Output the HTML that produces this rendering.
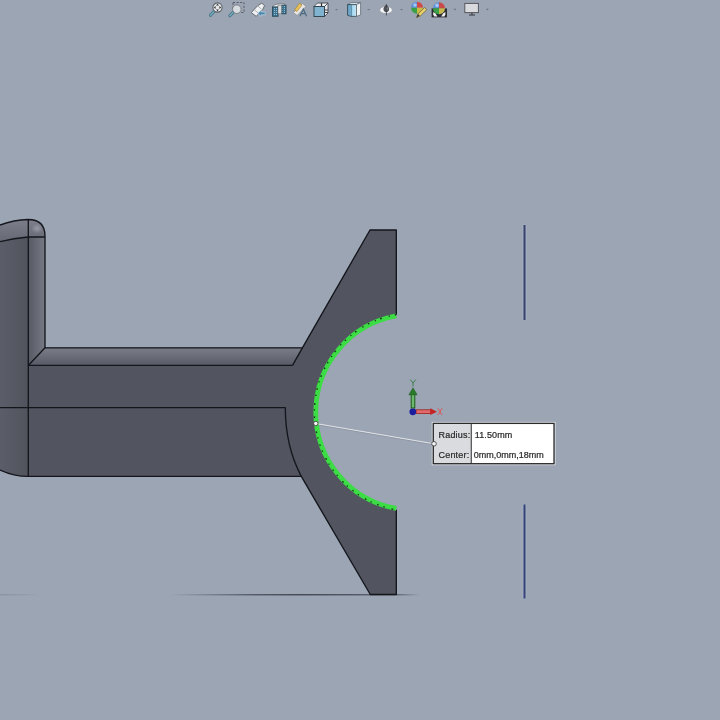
<!DOCTYPE html>
<html><head><meta charset="utf-8">
<style>
html,body{margin:0;padding:0;width:720px;height:720px;overflow:hidden;background:#9ca5b4;}
svg{display:block;position:absolute;left:0;top:0;}
.h{position:absolute;font-family:"Liberation Sans",sans-serif;font-size:9px;line-height:10px;color:#2a2a2a;white-space:nowrap;-webkit-text-stroke:0.22px #2a2a2a;}
.t{font-family:"Liberation Sans",sans-serif;font-size:9px;fill:#2a2a2a;stroke:#2a2a2a;stroke-width:0.15px;}
</style></head>
<body>
<svg width="720" height="720" viewBox="0 0 720 720">
<defs>
  <linearGradient id="gCube" x1="0" y1="0" x2="1" y2="0">
    <stop offset="0" stop-color="#5d97ba"/>
    <stop offset="0.45" stop-color="#7fb7d6"/>
    <stop offset="0.55" stop-color="#a3d6ef"/>
    <stop offset="1" stop-color="#c8e6f4"/>
  </linearGradient>
  <pattern id="hatch" width="2" height="2" patternUnits="userSpaceOnUse">
    <rect width="2" height="2" fill="#3f7590"/>
    <rect width="1" height="1" fill="#8cc0d8"/>
  </pattern>
  <linearGradient id="gShadow" x1="0" y1="0" x2="1" y2="0">
    <stop offset="0" stop-color="#3c3f49" stop-opacity="0.18"/>
    <stop offset="0.058" stop-color="#3c3f49" stop-opacity="0.1"/>
    <stop offset="0.093" stop-color="#3c3f49" stop-opacity="0"/>
    <stop offset="0.395" stop-color="#3c3f49" stop-opacity="0"/>
    <stop offset="0.59" stop-color="#3c3f49" stop-opacity="0.8"/>
    <stop offset="0.70" stop-color="#3c3f49" stop-opacity="1"/>
    <stop offset="0.92" stop-color="#3c3f49" stop-opacity="0.7"/>
    <stop offset="0.977" stop-color="#3c3f49" stop-opacity="0"/>
  </linearGradient>
  <linearGradient id="gLeft" x1="0" y1="0" x2="1" y2="0">
    <stop offset="0" stop-color="#5b5d68"/>
    <stop offset="1" stop-color="#51535d"/>
  </linearGradient>
  <linearGradient id="gRight" x1="0" y1="0" x2="1" y2="0">
    <stop offset="0" stop-color="#565862"/>
    <stop offset="1" stop-color="#777985"/>
  </linearGradient>
  <linearGradient id="gCham" x1="0" y1="0" x2="0" y2="1">
    <stop offset="0" stop-color="#7b7d89"/>
    <stop offset="1" stop-color="#585a65"/>
  </linearGradient>
  <linearGradient id="gTop" x1="0" y1="0" x2="0" y2="1">
    <stop offset="0" stop-color="#7c7e8b"/>
    <stop offset="1" stop-color="#666873"/>
  </linearGradient>
  <radialGradient id="gHi" cx="0.5" cy="0.5" r="0.5">
    <stop offset="0" stop-color="#a4a6b2" stop-opacity="0.75"/>
    <stop offset="1" stop-color="#a4a6b2" stop-opacity="0"/>
  </radialGradient>
</defs>

<!-- toolbar -->
<g id="toolbar">
  <!-- 1 zoom to fit -->
  <line x1="210.5" y1="15.3" x2="214" y2="11.5" stroke="#3f6f82" stroke-width="3" stroke-linecap="round"/>
  <line x1="210.5" y1="15.3" x2="214" y2="11.5" stroke="#79aec0" stroke-width="1.4" stroke-linecap="round"/>
  <circle cx="217.5" cy="7.5" r="4.6" fill="#e4e6ea" stroke="#5c5f66" stroke-width="1.1"/>
  <path d="M217.5,3.8 L219,5.6 L216,5.6Z M217.5,11.2 L219,9.4 L216,9.4Z M213.8,7.5 L215.6,6 L215.6,9Z M221.2,7.5 L219.4,6 L219.4,9Z" fill="#333"/>
  <!-- 2 zoom to area -->
  <rect x="233" y="2.5" width="11" height="10" fill="none" stroke="#55585f" stroke-width="1" stroke-dasharray="2 1.6"/>
  <line x1="229.8" y1="15.8" x2="233" y2="12.6" stroke="#3f6f82" stroke-width="3" stroke-linecap="round"/>
  <line x1="229.8" y1="15.8" x2="233" y2="12.6" stroke="#79aec0" stroke-width="1.4" stroke-linecap="round"/>
  <circle cx="236.8" cy="9.2" r="4.3" fill="#d6dbe0" stroke="#7a7e86" stroke-width="1"/>
  <!-- 3 previous view -->
  <path d="M251.3,12.6 L257.5,5.8 L261.8,3.2 L264.6,5.6 L262.6,9.6 L256.2,16.3 Z" fill="#eef0f2" stroke="#5f636a" stroke-width="0.9"/>
  <line x1="254.2" y1="9.7" x2="259" y2="13.6" stroke="#a0a3a8" stroke-width="0.8"/>
  <line x1="258" y1="6.2" x2="261.7" y2="9.4" stroke="#a0a3a8" stroke-width="0.8"/>
  <path d="M257.8,13.4 L261.2,10.2 L261.2,12 L265.2,12 L265.2,14.8 L261.2,14.8 L261.2,16.6 Z" fill="#4b86ab" stroke="#b9d6ea" stroke-width="0.7"/>
  <!-- 4 section view -->
  <path d="M272.5,7 Q273.5,4.5 277,4.2 L284.5,3.8 L284.5,6 L278,6.5 L278,7 Z" fill="#eef0f2" stroke="#555" stroke-width="0.6"/>
  <rect x="272.5" y="7" width="5.5" height="9.3" fill="url(#hatch)" stroke="#2a4b5c" stroke-width="0.9"/>
  <rect x="278" y="5.5" width="4" height="8" fill="#d8dadd" stroke="#777" stroke-width="0.5"/>
  <rect x="282" y="5.2" width="4" height="8.6" fill="url(#hatch)" stroke="#2a4b5c" stroke-width="0.9"/>
  <!-- 5 dynamic annotation -->
  <path d="M293.5,12.5 L302.5,3.5 L306,6.5 L297,15.5 Z" fill="#e8e6e6" stroke="#8a8a8a" stroke-width="0.7"/>
  <path d="M294.5,10 L299.5,3.2 L302,5 L297,11.5 Z" fill="#e8c25a" stroke="#9b7a30" stroke-width="0.6"/>
  <path d="M300,16.3 L303.3,9 L306.6,16.3 M301.3,13.6 L305.3,13.6" fill="none" stroke="#4b6b80" stroke-width="1.2"/>
  <!-- 6 view orientation -->
  <path d="M314,6.5 L317.5,3 L328,3 L324.5,6.5 Z" fill="#eceef2" stroke="#3a3c42" stroke-width="0.8"/>
  <path d="M324.5,6.5 L328,3 L328,13 L324.5,16.5 Z" fill="#e6e8ec" stroke="#3a3c42" stroke-width="0.8"/>
  <rect x="314" y="6.5" width="10.5" height="10" fill="#7fb3cf" stroke="#2c3f4c" stroke-width="0.9"/>
  <line x1="321.5" y1="3" x2="321.5" y2="6.5" stroke="#333" stroke-width="1.2"/>
  <line x1="324.8" y1="10" x2="328" y2="10" stroke="#333" stroke-width="0.9"/>
  <line x1="324.8" y1="12.5" x2="328" y2="12.5" stroke="#333" stroke-width="0.9"/>
  <!-- dropdown arrows -->
  <g fill="#6e7480">
    <path d="M335,9 L338,9 L336.5,10.6Z"/>
    <path d="M367.2,9 L370.2,9 L368.7,10.6Z"/>
    <path d="M400,9 L403,9 L401.5,10.6Z"/>
    <path d="M453.4,8.8 L456.4,8.8 L454.9,10.4Z"/>
    <path d="M485.8,8.8 L488.8,8.8 L487.3,10.4Z"/>
  </g>
  <!-- 7 display style cube -->
  <path d="M347.5,4.6 L351,2.6 L360.6,2.6 L356.5,4.6 Z" fill="#dfe8ee" stroke="#55606a" stroke-width="0.7"/>
  <path d="M347.5,4.6 L356.5,4.6 L356.5,16.4 L351,16.4 L347.5,15.2 Z" fill="url(#gCube)" stroke="#34444f" stroke-width="0.8"/>
  <line x1="351.3" y1="4.8" x2="351.3" y2="16.2" stroke="#4d7892" stroke-width="0.7"/>
  <path d="M356.5,4.6 L360.6,2.6 L360.6,14.8 L356.5,16.4 Z" fill="#f0f2f4" stroke="#55606a" stroke-width="0.7"/>
  <!-- 8 eye -->
  <ellipse cx="386" cy="10" rx="6.3" ry="3.6" fill="#f2f3f5" stroke="#8e929a" stroke-width="0.6"/>
  <path d="M386.3,4.6 C388.6,6.6 389.3,8 389.1,9.6 C388.9,11.4 387.6,12.2 386.3,12.2 C385,12.2 383.7,11.4 383.5,9.6 C383.3,8 384,6.6 386.3,4.6 Z" fill="#505259"/>
  <ellipse cx="387" cy="8.6" rx="0.9" ry="1.3" fill="#8a8c92"/>
  <line x1="386.4" y1="4" x2="386.4" y2="15.5" stroke="#3a3c42" stroke-width="0.75"/>
  <!-- 9 edit appearance -->
  <g>
    <path d="M417,7.8 L417,1.8 A6,6 0 0 0 411,7.8 Z" fill="#5b8fd6"/>
    <path d="M417,7.8 L423,7.8 A6,6 0 0 0 417,1.8 Z" fill="#d04848"/>
    <path d="M417,7.8 L411,7.8 A6,6 0 0 0 417,13.8 Z" fill="#3aa048"/>
    <path d="M417,7.8 L417,13.8 A6,6 0 0 0 423,7.8 Z" fill="#c9b84a"/>
    <circle cx="415" cy="5" r="1.8" fill="#b8d4ff" opacity="0.8"/>
    <path d="M416.5,17.5 L418,14 L424.5,7.5 L426.8,9.6 L420.3,16.1 Z" fill="#e2cf6e" stroke="#6e5a2a" stroke-width="0.7"/>
    <path d="M416.5,17.5 L418,14 L419.8,15.8 Z" fill="#333"/>
  </g>
  <!-- 10 apply scene -->
  <g>
    <rect x="431.6" y="8.4" width="15.4" height="9" fill="#2b2d33"/>
    <path d="M433.2,12 L435.5,13.6 L437.4,16.4 L434.2,16.4 L433.2,14.5 Z" fill="#eeeeee"/>
    <path d="M445.4,12 L443.1,13.6 L441.2,16.4 L444.4,16.4 L445.4,14.5 Z" fill="#eeeeee"/>
    <path d="M439,8.2 L439,2.2 A6,6 0 0 0 433,8.2 Z" fill="#5b8fd6"/>
    <path d="M439,8.2 L445,8.2 A6,6 0 0 0 439,2.2 Z" fill="#c84a4a"/>
    <path d="M439,8.2 L433,8.2 A6,6 0 0 0 439,14.2 Z" fill="#3aa048"/>
    <path d="M439,8.2 L439,14.2 A6,6 0 0 0 445,8.2 Z" fill="#c6b650"/>
    <circle cx="437" cy="5.4" r="1.8" fill="#b8d4ff" opacity="0.8"/>
  </g>
  <!-- 11 monitor -->
  <rect x="464.8" y="3.4" width="13.6" height="9.2" fill="#d9dade" stroke="#55575d" stroke-width="1"/>
  <rect x="471" y="12.6" width="1.8" height="2" fill="#55575d"/>
  <rect x="469" y="14.4" width="6" height="1.2" fill="#45474d"/>
</g>

<!-- floor shadow line -->
<rect x="0" y="594.1" width="430" height="1.3" fill="url(#gShadow)"/>

<!-- body -->
<path d="M0,225 Q14,220 28,219.5 Q45,219.5 45,236 L45,347.8 L302.4,347.8 L370,230 L396.3,230 L396.3,314.7 A99,99 0 0 0 396.3,509.7 L396.3,594.5 L370.3,594.5 L301.3,476.4 L28,476.4 Q14,476.4 0,470 Z" fill="#52545f"/>
<!-- left face gradient -->
<path d="M0,241.7 Q14,238 28,237 L28,476.4 Q14,476.4 0,470 Z" fill="url(#gLeft)"/>
<!-- right rounded face -->
<path d="M28,237 L45,237 L45,347.8 L28.5,365.3 Z" fill="url(#gRight)"/>
<!-- top face -->
<path d="M0,225 Q14,220 28,219.5 Q45,219.5 45,236 L45,237 L28,237 Q14,238 0,241.7 Z" fill="url(#gTop)"/>
<ellipse cx="37" cy="228.5" rx="6" ry="5" fill="url(#gHi)"/>
<!-- chamfer face -->
<path d="M45,347.8 L302.4,347.8 L292.5,365.3 L28.5,365.3 Z" fill="url(#gCham)"/>

<!-- edges -->
<g fill="none" stroke="#14161c" stroke-width="1.35" stroke-linejoin="round">
<path d="M0,225 Q14,220 28,219.5 Q45,219.5 45,236 L45,347.8 L302.4,347.8 L370,230 L396.3,230 L396.3,314.7"/>
<path d="M396.3,509.7 L396.3,594.5 L370.3,594.5 L301.3,476.4 L28,476.4 Q14,476.4 0,470"/>
<path d="M28.3,219.5 L28.3,476.4"/>
<path d="M0,241.7 Q14,238 28,237 L45,237"/>
<path d="M45,347.8 L28.5,365.3 L292.5,365.3"/>
<path d="M302.4,347.8 L292.5,365.3"/>
<path d="M0,407.6 L285.3,407.6 C285.3,436 291.5,458 301.3,476.4"/>
</g>

<!-- green arc -->
<path d="M396.3,315.94 A97.8,97.8 0 0 0 396.3,508.46" fill="none" stroke="#3bdc44" stroke-width="4.8"/>
<path d="M396.3,314.52 A99.2,99.2 0 0 0 396.3,509.88" fill="none" stroke="#183a1a" stroke-width="1.35" stroke-dasharray="1.6 5 1.4 7 1.8 4.5 1.2 6"/>

<!-- blue lines -->
<rect x="522.3" y="224.3" width="4.4" height="96.2" rx="2" fill="#a9b3c7" opacity="0.55"/>
<rect x="523.5" y="225" width="2" height="95" fill="#36426f"/>
<rect x="522.3" y="503.8" width="4.4" height="95.4" rx="2" fill="#a9b3c7" opacity="0.55"/>
<rect x="523.5" y="504.5" width="2" height="94" fill="#36437a"/>

<!-- triad -->
<g>
  <rect x="411.2" y="394" width="3.6" height="14" fill="#6cb86c" stroke="#1a5a1a" stroke-width="1"/>
  <path d="M408.8,394.8 L413,387.8 L417.2,394.8 Z" fill="#2a7a2a" stroke="#1d5a1d" stroke-width="0.5"/>
  <path d="M410.3,379.5 L413,383 L415.8,379.5 M413,383 L413,386.5" stroke="#3f7d4f" stroke-width="1" fill="none"/>
  <rect x="416" y="409.8" width="14.8" height="3.8" fill="#e26a6a" stroke="#9a2020" stroke-width="0.8"/>
  <path d="M430.3,408.3 L437,411.7 L430.3,415.1 Z" fill="#c42424"/>
  <path d="M437.8,408.3 L442,415 M442,408.3 L437.8,415" stroke="#dd5555" stroke-width="1" fill="none"/>
  <circle cx="412.8" cy="411.8" r="3.4" fill="#1c1c9e"/>
</g>

<!-- leader -->
<line x1="315.8" y1="424.4" x2="434" y2="444.7" stroke="#7d8490" stroke-width="0.8" opacity="0.6"/>
<line x1="315.8" y1="423.5" x2="434" y2="443.8" stroke="#e2e4e8" stroke-width="1"/>
<circle cx="315.8" cy="423.5" r="2.2" fill="#f4f4f4" stroke="#333" stroke-width="0.8"/>

<!-- dimension box -->
<rect x="432.3" y="422.4" width="122.7" height="42.3" fill="none" stroke="#e6e8ec" stroke-width="1"/>
<rect x="433.3" y="423.4" width="120.7" height="40.3" fill="#ffffff" stroke="#2b2b2b" stroke-width="1.3"/>
<rect x="434" y="424" width="37.2" height="39" fill="#d9dbdf"/>
<line x1="471.25" y1="423.4" x2="471.25" y2="463.7" stroke="#2b2b2b" stroke-width="1"/>
<circle cx="434" cy="443.8" r="2.3" fill="#f4f4f4" stroke="#333" stroke-width="0.8"/>


</svg>
<div id="txt" style="position:absolute;left:0;top:0;width:720px;height:720px;will-change:transform;">
<div class="h" style="left:438.5px;top:430px;letter-spacing:0.2px;">Radius:</div>
<div class="h" style="left:438.5px;top:450.2px;letter-spacing:0.2px;">Center:</div>
<div class="h" style="left:474.8px;top:430.2px;letter-spacing:0.1px;">11.50mm</div>
<div class="h" style="left:473.8px;top:450.1px;letter-spacing:0px;">0mm,0mm,18mm</div>
</div>
</body></html>
